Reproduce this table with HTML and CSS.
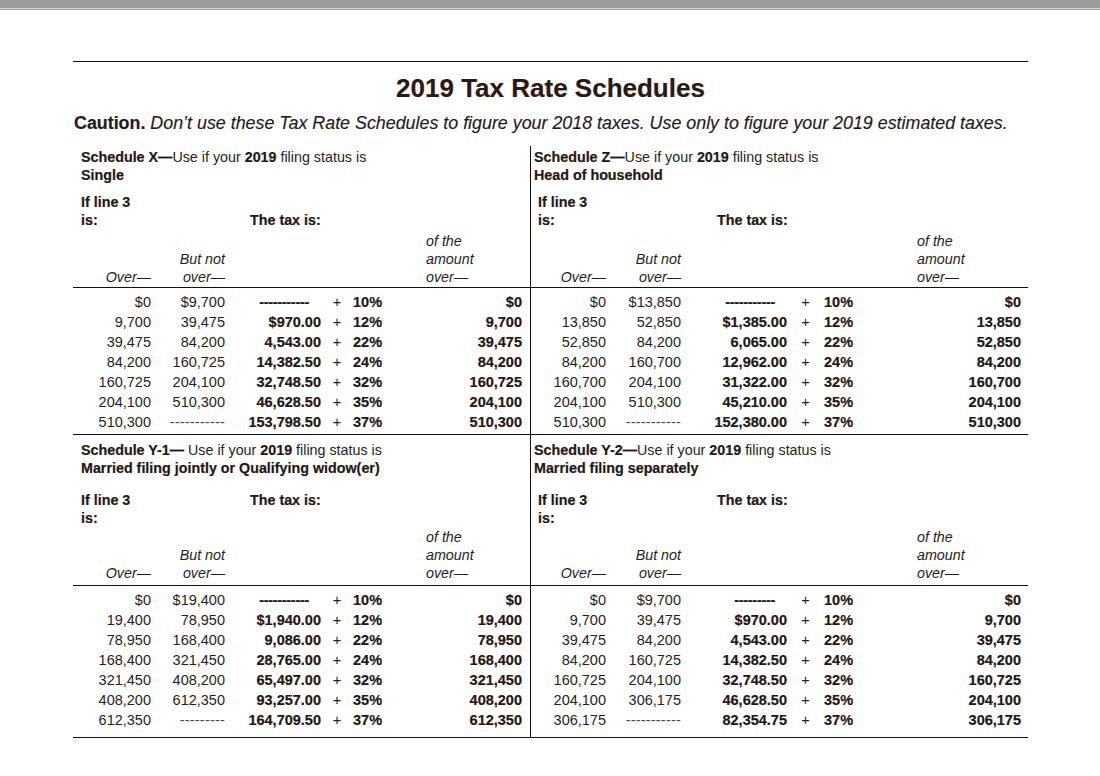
FILE: index.html
```html
<!DOCTYPE html>
<html lang="en">
<head>
<meta charset="utf-8">
<title>2019 Tax Rate Schedules</title>
<link rel="stylesheet" href="styles.css">
</head>
<body>
<div class="topbar"></div>
<main class="page">
  <h1 class="title">2019 Tax Rate Schedules</h1>
  <p class="caution"><b>Caution.</b> <i>Don’t use these Tax Rate Schedules to figure your 2018 taxes. Use only to figure your 2019 estimated taxes.</i></p>

  <div class="grid">
    <!-- Schedule X -->
    <section class="sched left top">
      <div class="sh"><b>Schedule X—</b>Use if your <b>2019</b> filing status is<br><b>Single</b></div>
      <div class="ifline"><div class="if">If line 3<br>is:</div><div class="taxis">The tax is:</div></div>
      <div class="cols hdr">
        <div class="c1">Over—</div>
        <div class="c2">But not<br>over—</div>
        <div class="c6">of the<br>amount<br>over—</div>
      </div>
      <div class="cols rows">
        <span class="r">$0</span><span class="r">$9,700</span><span class="b r dash">-----------</span><span class="p">+</span><span class="b">10%</span><span class="b r">$0</span>
        <span class="r">9,700</span><span class="r">39,475</span><span class="b r">$970.00</span><span class="p">+</span><span class="b">12%</span><span class="b r">9,700</span>
        <span class="r">39,475</span><span class="r">84,200</span><span class="b r">4,543.00</span><span class="p">+</span><span class="b">22%</span><span class="b r">39,475</span>
        <span class="r">84,200</span><span class="r">160,725</span><span class="b r">14,382.50</span><span class="p">+</span><span class="b">24%</span><span class="b r">84,200</span>
        <span class="r">160,725</span><span class="r">204,100</span><span class="b r">32,748.50</span><span class="p">+</span><span class="b">32%</span><span class="b r">160,725</span>
        <span class="r">204,100</span><span class="r">510,300</span><span class="b r">46,628.50</span><span class="p">+</span><span class="b">35%</span><span class="b r">204,100</span>
        <span class="r">510,300</span><span class="r thin">-----------</span><span class="b r">153,798.50</span><span class="p">+</span><span class="b">37%</span><span class="b r">510,300</span>
      </div>
    </section>

    <!-- Schedule Z -->
    <section class="sched right top">
      <div class="sh"><b>Schedule Z—</b>Use if your <b>2019</b> filing status is<br><b>Head of household</b></div>
      <div class="ifline"><div class="if">If line 3<br>is:</div><div class="taxis">The tax is:</div></div>
      <div class="cols hdr">
        <div class="c1">Over—</div>
        <div class="c2">But not<br>over—</div>
        <div class="c6">of the<br>amount<br>over—</div>
      </div>
      <div class="cols rows">
        <span class="r">$0</span><span class="r">$13,850</span><span class="b r dash">-----------</span><span class="p">+</span><span class="b">10%</span><span class="b r">$0</span>
        <span class="r">13,850</span><span class="r">52,850</span><span class="b r">$1,385.00</span><span class="p">+</span><span class="b">12%</span><span class="b r">13,850</span>
        <span class="r">52,850</span><span class="r">84,200</span><span class="b r">6,065.00</span><span class="p">+</span><span class="b">22%</span><span class="b r">52,850</span>
        <span class="r">84,200</span><span class="r">160,700</span><span class="b r">12,962.00</span><span class="p">+</span><span class="b">24%</span><span class="b r">84,200</span>
        <span class="r">160,700</span><span class="r">204,100</span><span class="b r">31,322.00</span><span class="p">+</span><span class="b">32%</span><span class="b r">160,700</span>
        <span class="r">204,100</span><span class="r">510,300</span><span class="b r">45,210.00</span><span class="p">+</span><span class="b">35%</span><span class="b r">204,100</span>
        <span class="r">510,300</span><span class="r thin">-----------</span><span class="b r">152,380.00</span><span class="p">+</span><span class="b">37%</span><span class="b r">510,300</span>
      </div>
    </section>

    <!-- Schedule Y-1 -->
    <section class="sched left bot">
      <div class="sh"><b>Schedule Y-1—</b> Use if your <b>2019</b> filing status is<br><b>Married filing jointly or Qualifying widow(er)</b></div>
      <div class="ifline"><div class="if">If line 3<br>is:</div><div class="taxis">The tax is:</div></div>
      <div class="cols hdr">
        <div class="c1">Over—</div>
        <div class="c2">But not<br>over—</div>
        <div class="c6">of the<br>amount<br>over—</div>
      </div>
      <div class="cols rows">
        <span class="r">$0</span><span class="r">$19,400</span><span class="b r dash">-----------</span><span class="p">+</span><span class="b">10%</span><span class="b r">$0</span>
        <span class="r">19,400</span><span class="r">78,950</span><span class="b r">$1,940.00</span><span class="p">+</span><span class="b">12%</span><span class="b r">19,400</span>
        <span class="r">78,950</span><span class="r">168,400</span><span class="b r">9,086.00</span><span class="p">+</span><span class="b">22%</span><span class="b r">78,950</span>
        <span class="r">168,400</span><span class="r">321,450</span><span class="b r">28,765.00</span><span class="p">+</span><span class="b">24%</span><span class="b r">168,400</span>
        <span class="r">321,450</span><span class="r">408,200</span><span class="b r">65,497.00</span><span class="p">+</span><span class="b">32%</span><span class="b r">321,450</span>
        <span class="r">408,200</span><span class="r">612,350</span><span class="b r">93,257.00</span><span class="p">+</span><span class="b">35%</span><span class="b r">408,200</span>
        <span class="r">612,350</span><span class="r thin">---------</span><span class="b r">164,709.50</span><span class="p">+</span><span class="b">37%</span><span class="b r">612,350</span>
      </div>
    </section>

    <!-- Schedule Y-2 -->
    <section class="sched right bot">
      <div class="sh"><b>Schedule Y-2—</b>Use if your <b>2019</b> filing status is<br><b>Married filing separately</b></div>
      <div class="ifline"><div class="if">If line 3<br>is:</div><div class="taxis">The tax is:</div></div>
      <div class="cols hdr">
        <div class="c1">Over—</div>
        <div class="c2">But not<br>over—</div>
        <div class="c6">of the<br>amount<br>over—</div>
      </div>
      <div class="cols rows">
        <span class="r">$0</span><span class="r">$9,700</span><span class="b r dash">---------</span><span class="p">+</span><span class="b">10%</span><span class="b r">$0</span>
        <span class="r">9,700</span><span class="r">39,475</span><span class="b r">$970.00</span><span class="p">+</span><span class="b">12%</span><span class="b r">9,700</span>
        <span class="r">39,475</span><span class="r">84,200</span><span class="b r">4,543.00</span><span class="p">+</span><span class="b">22%</span><span class="b r">39,475</span>
        <span class="r">84,200</span><span class="r">160,725</span><span class="b r">14,382.50</span><span class="p">+</span><span class="b">24%</span><span class="b r">84,200</span>
        <span class="r">160,725</span><span class="r">204,100</span><span class="b r">32,748.50</span><span class="p">+</span><span class="b">32%</span><span class="b r">160,725</span>
        <span class="r">204,100</span><span class="r">306,175</span><span class="b r">46,628.50</span><span class="p">+</span><span class="b">35%</span><span class="b r">204,100</span>
        <span class="r">306,175</span><span class="r thin">-----------</span><span class="b r">82,354.75</span><span class="p">+</span><span class="b">37%</span><span class="b r">306,175</span>
      </div>
    </section>
  </div>
</main>
</body>
</html>
```
FILE: styles.css
```css
html, body {
  margin: 0;
  padding: 0;
  background: #ffffff;
}

body {
  font-family: "Liberation Sans", Arial, Helvetica, sans-serif;
  color: #231f20;
}

b {
  font-weight: bold;
  color: #241712;
  -webkit-text-stroke: 0.2px #241712;
}

.topbar {
  height: 8px;
  background: #9b9b9b;
  border-bottom: 1px solid #d2d2d2;
  box-shadow: 0 1px 0 #a6a6a6;
}

.page {
  width: 955px;
  margin: 52px 0 0 73px;
  border-top: 1px solid #111;
}

.title {
  margin: 0;
  padding-top: 11px;
  font-size: 26px;
  line-height: 30px;
  font-weight: bold;
  text-align: center;
  color: #2a1a12;
  -webkit-text-stroke: 0.2px #2a1a12;
}

.caution {
  margin: 9px 0 0 1px;
  font-size: 17.85px;
  line-height: 22px;
  color: #1f1b1c;
}
.caution b { color: #1f1b1c; -webkit-text-stroke: 0.2px #1f1b1c; }
.caution i { -webkit-text-stroke: 0.15px #1f1b1c; }

.grid {
  display: grid;
  grid-template-columns: 457px 498px;
  margin-top: 12px;
}

.sched {
  border-bottom: 1px solid #111;
  font-size: 14.3px;
}

.sched.right { border-left: 1px solid #111; }

.sched.top { padding-top: 2px; }
.sched.bot { padding-top: 6px; }

.sh {
  line-height: 18px;
  padding-left: 8px;
}
.right .sh { padding-left: 3px; }

.ifline {
  display: flex;
  font-weight: bold;
  line-height: 18px;
  padding-left: 8px;
  color: #241712;
  -webkit-text-stroke: 0.2px #241712;
}
.right .ifline { padding-left: 7px; }
.top .ifline { margin-top: 9px; }
.bot .ifline { margin-top: 14px; }

.if { width: 169px; }
.right .if { width: 179px; }
.top .taxis { align-self: flex-end; }
.bot .taxis { align-self: flex-start; }

.cols {
  display: grid;
  grid-template-columns: 78px 74px 96px 32px 73px 1fr;
  padding-right: 8px;
}
.right .cols {
  grid-template-columns: 75px 75px 106px 37px 93px 1fr;
  padding-right: 7px;
}

.hdr {
  font-style: italic;
  line-height: 18px;
  align-items: end;
  border-bottom: 1px solid #111;
  font-size: 14.3px;
}
.top .hdr { margin-top: 3px; padding-bottom: 1px; }
.bot .hdr { margin-top: 1px; padding-bottom: 3px; }

.hdr .c1 { grid-column: 1; text-align: right; }
.hdr .c2 { grid-column: 2; text-align: right; }
.hdr .c6 { grid-column: 6; text-align: left; }

.rows {
  font-size: 14.5px;
  line-height: 20px;
}
.top .rows { padding: 4px 8px 2px 0; }
.bot .rows { padding: 4px 8px 7px 0; }
.right.top .rows, .right.bot .rows { padding-right: 7px; }

.rows span { white-space: nowrap; }
.rows .r { text-align: right; }
.rows .b {
  font-weight: bold;
  color: #241712;
  -webkit-text-stroke: 0.2px #241712;
}
.rows .p { text-align: center; }
.rows .dash { padding-right: 12px; letter-spacing: -0.3px; }
.rows .thin { color: #4a4a4a; letter-spacing: 0.2px; }
```
